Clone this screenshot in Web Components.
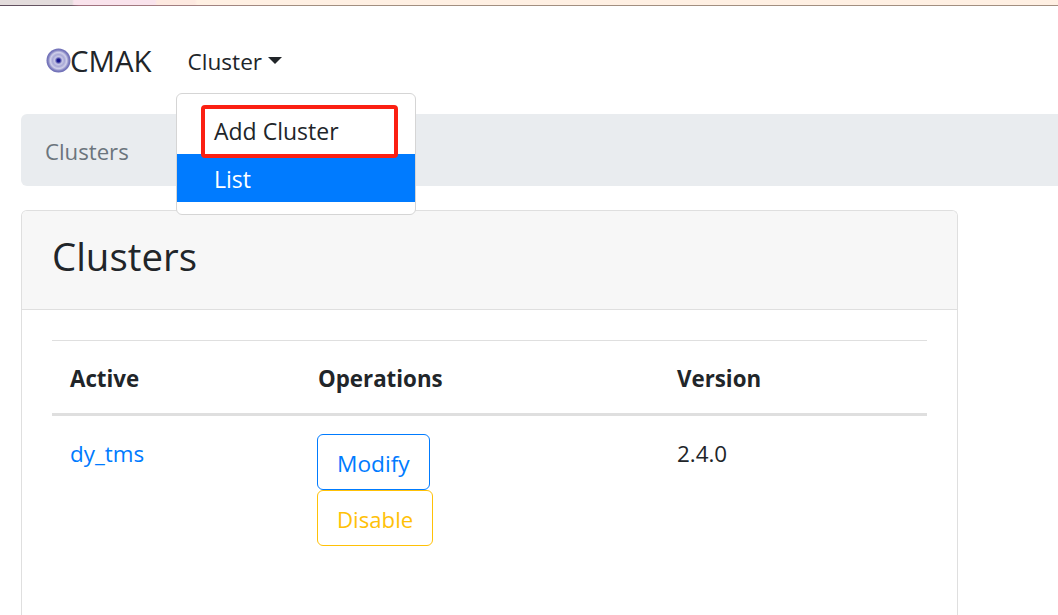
<!DOCTYPE html>
<html>
<head>
<meta charset="utf-8">
<title>CMAK</title>
<style>
html, body { margin: 0; height: 615px; overflow: hidden; background: #fff; }
body { font-family: "Open Sans", "Noto Sans", sans-serif; color: #212529; }
</style>
</head>
<body>
<top-strip></top-strip>
<app-navbar></app-navbar>
<app-breadcrumb>Clusters</app-breadcrumb>
<cluster-card title-text="Clusters">
  <cluster-table></cluster-table>
</cluster-card>

<script>
class TopStrip extends HTMLElement {
  connectedCallback() {
    this.attachShadow({ mode: "open" }).innerHTML = `
<style>
:host { display: block; height: 5px; border-bottom: 1px solid #a28f80;
  border-image: linear-gradient(90deg, #5e4d5c 0, #6b5a66 72px, #a0707f 80px, #a28f80 300px) 1;
  background: linear-gradient(90deg, #e3dcdc 0 72px, #f9e3ec 74px 155px, #fde9e0 157px 195px, #fff0e3 197px); }
</style>`;
  }
}

class AppNavbar extends HTMLElement {
  connectedCallback() {
    this.attachShadow({ mode: "open" }).innerHTML = `
<style>
:host { display: flex; align-items: center; height: 108px; padding-left: 46px; box-sizing: border-box; position: relative; font-size: 22.6px; }
.brand { display: flex; align-items: center; font-size: 29.4px; margin-top: 2px; }
.brand svg { width: 25px; height: 25px; display: block; margin-top: -2px; margin-right: -1px; }
.toggle { display: flex; align-items: center; margin-left: 36px; margin-top: 2px; }
.caret { width: 0; height: 0; margin-left: 6px; margin-top: -2px; border-top: 7px solid #212529; border-left: 7px solid transparent; border-right: 7px solid transparent; }
.menu { position: absolute; left: 176px; top: 87px; width: 240px; height: 122px; box-sizing: border-box; padding: 12px 0; background: #fff; border: 1px solid #d5d5d5; border-radius: 6px; z-index: 2; }
.item { height: 48px; line-height: 50px; padding-left: 37px; font-size: 23px; }
.item.active { background: #007bff; color: #fff; }
.mark { position: absolute; left: 24px; top: 11px; width: 197px; height: 53px; box-sizing: border-box; border: 4px solid #fb2012; border-radius: 4px; }
</style>
<div class="brand">
  <svg viewBox="0 0 25 25">
    <defs>
      <radialGradient id="disc">
        <stop offset="0" stop-color="#10108a"/>
        <stop offset=".12" stop-color="#1a1a90"/>
        <stop offset=".32" stop-color="#c8c8e6"/>
        <stop offset=".5" stop-color="#a8a8d6"/>
        <stop offset=".68" stop-color="#d0d0ea"/>
        <stop offset=".86" stop-color="#8080c0"/>
        <stop offset="1" stop-color="#6a6ab4"/>
      </radialGradient>
    </defs>
    <circle cx="12.5" cy="12.5" r="12" fill="url(#disc)"/>
  </svg>
  <span>CMAK</span>
</div>
<div class="toggle"><span>Cluster</span><span class="caret"></span></div>
<div class="menu">
  <div class="item">Add Cluster</div>
  <div class="item active">List</div>
  <div class="mark"></div>
</div>`;
  }
}

class AppBreadcrumb extends HTMLElement {
  connectedCallback() {
    this.attachShadow({ mode: "open" }).innerHTML = `
<style>
:host { display: block; height: 72px; margin-left: 21px; padding-left: 24px; box-sizing: border-box; line-height: 75px; font-size: 22.2px; color: #6c757d; background: #e9ecef; border-radius: 6px 0 0 6px; }
</style>
<slot></slot>`;
  }
}

class ClusterCard extends HTMLElement {
  connectedCallback() {
    this.attachShadow({ mode: "open" }).innerHTML = `
<style>
:host { display: block; width: 937px; height: 405px; margin: 24px 0 0 21px; box-sizing: border-box; background: #fff; border: 1px solid #dfdfdf; border-bottom: 0; border-radius: 6px 6px 0 0; }
header { height: 99px; box-sizing: border-box; padding-left: 30px; background: #f7f7f7; border-bottom: 1px solid #dfdfdf; border-radius: 5px 5px 0 0; font-size: 38.4px; line-height: 91px; }
.body { padding: 30px 30px 0; }
</style>
<header>${this.getAttribute("title-text")}</header>
<div class="body"><slot></slot></div>`;
  }
}

class ClusterTable extends HTMLElement {
  connectedCallback() {
    this.attachShadow({ mode: "open" }).innerHTML = `
<style>
:host { display: block; font-size: 22.4px; }
.row { display: grid; grid-template-columns: 248px 359px 1fr; padding-left: 18px; }
.head { height: 72px; border-top: 1px solid #dfdfdf; border-bottom: 3px solid #dfdfdf; font-weight: 700; font-size: 22.3px; line-height: 75px; }
.data { padding-top: 18px; }
.data > div { line-height: 40px; }
a { color: #007bff; text-decoration: none; }
.ops { display: flex; flex-direction: column; align-items: flex-start; margin-left: -1px; }
button { display: block; height: 56px; padding: 2px 19px 0; font: inherit; line-height: 54px; background: #fff; border: 1px solid; border-radius: 6px; }
.primary { color: #007bff; border-color: #007bff; font-size: 22.7px; }
.warning { color: #ffc107; border-color: #ffc107; font-size: 22.2px; }
</style>
<div class="row head"><div>Active</div><div>Operations</div><div>Version</div></div>
<div class="row data">
  <div><a href="#">dy_tms</a></div>
  <div class="ops"><button class="primary">Modify</button><button class="warning">Disable</button></div>
  <div>2.4.0</div>
</div>`;
  }
}

customElements.define("top-strip", TopStrip);
customElements.define("app-navbar", AppNavbar);
customElements.define("app-breadcrumb", AppBreadcrumb);
customElements.define("cluster-card", ClusterCard);
customElements.define("cluster-table", ClusterTable);
</script>
</body>
</html>
